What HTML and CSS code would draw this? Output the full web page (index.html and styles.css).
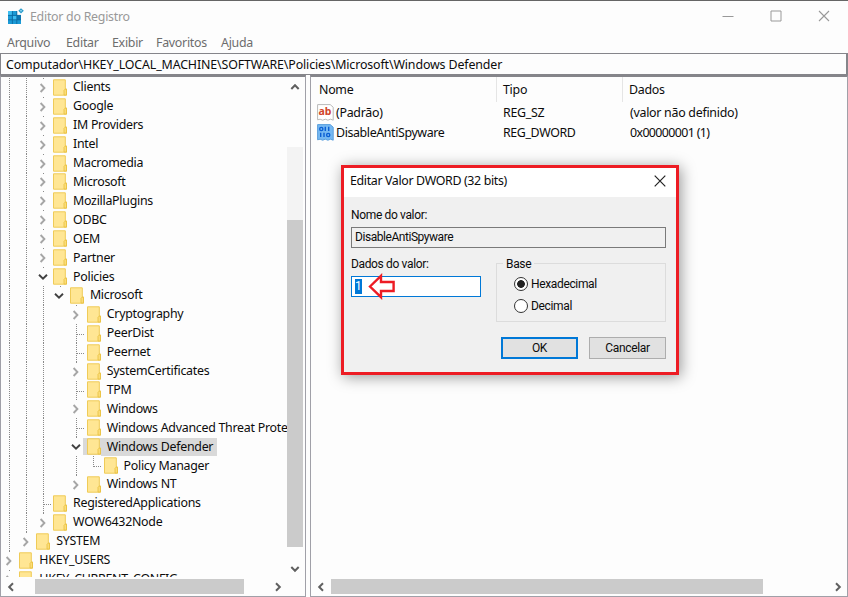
FILE: index.html
```
<!DOCTYPE html>
<html lang="pt-BR">
<head>
    <meta charset="UTF-8">
    <meta name="viewport" content="width=device-width, initial-scale=1.0">
    <title>Editor do Registro</title>
    <link rel="stylesheet" href="styles.css">
</head>
<body>
    <svg class="defs" width="0" height="0">
        <symbol id="folder" viewBox="0 0 14 17">
            <path d="M.5.8h11.8v9.2h1.2v6.2H.5z" fill="#ffe694" stroke="#efcb58"/>
            <path d="M11 16V11.2l1-1h1.5V16z" fill="#fbdc78" stroke="#e9c03f" stroke-width=".8"/>
        </symbol>
        <symbol id="right" viewBox="0 0 8 10">
            <path d="M1.6 1l3.8 4-3.8 4" fill="none" stroke="#a6a6a6" stroke-width="1.9"/>
        </symbol>
        <symbol id="down" viewBox="0 0 10 8">
            <path d="M1 1.8l4 3.8 4-3.8" fill="none" stroke="#404040" stroke-width="1.9"/>
        </symbol>
        <symbol id="arrow" viewBox="0 0 10 10">
            <path d="M7 1.3L3.2 5 7 8.7" fill="none" stroke="#606060" stroke-width="2"/>
        </symbol>
    </svg>

    <div class="window">
        <div class="titlebar">
            <svg class="app-icon" width="18" height="17" viewBox="0 0 18 17">
                <path d="M1 3h9v4h4v9H1z" fill="#1b9ad6"/>
                <path d="M1 3h4v4H1zM6 8h4v4H6z" fill="#3dbdf0"/>
                <path d="M10 8h4v4h-4z" fill="#0b74b0"/>
                <path d="M1 7.4h13M1 11.8h13M5.4 3v13M9.8 3v13" stroke="#0c6ba3" stroke-width=".9"/>
                <path d="M14 .2l2.8 2.6L14 5.6l-2.7-2.8z" fill="#2a9ccc"/>
                <path d="M14 1.8l1 1-1 1-1-1z" fill="#a8e2f8"/>
            </svg>
            <span class="app-title">Editor do Registro</span>
            <div class="window-buttons">
                <svg width="12" height="12" viewBox="0 0 12 12"><path d="M.5 6.5h11" stroke="#999"/></svg>
                <svg width="12" height="12" viewBox="0 0 12 12"><path d="M1 1h10v10H1z" fill="none" stroke="#999"/></svg>
                <svg width="12" height="12" viewBox="0 0 12 12"><path d="M1 1l10 10M11 1L1 11" stroke="#999" stroke-width="1.1"/></svg>
            </div>
        </div>

        <div class="menu">
            <span class="m1">Arquivo</span><span class="m2">Editar</span><span class="m3">Exibir</span><span class="m4">Favoritos</span><span>Ajuda</span>
        </div>

        <div class="address">Computador\HKEY_LOCAL_MACHINE\SOFTWARE\Policies\Microsoft\Windows Defender</div>

        <div class="panes">
            <div class="tree-pane">
                <div class="tree-main">
                    <div class="tree">
                        <div class="row"><i class="g"></i><i class="g"></i><i class="t"><svg class="r"><use href="#right"/></svg></i><svg class="f"><use href="#folder"/></svg><span>Clients</span></div>
                        <div class="row"><i class="g"></i><i class="g"></i><i class="t"><svg class="r"><use href="#right"/></svg></i><svg class="f"><use href="#folder"/></svg><span>Google</span></div>
                        <div class="row"><i class="g"></i><i class="g"></i><i class="t"><svg class="r"><use href="#right"/></svg></i><svg class="f"><use href="#folder"/></svg><span>IM Providers</span></div>
                        <div class="row"><i class="g"></i><i class="g"></i><i class="t"><svg class="r"><use href="#right"/></svg></i><svg class="f"><use href="#folder"/></svg><span>Intel</span></div>
                        <div class="row"><i class="g"></i><i class="g"></i><i class="t"><svg class="r"><use href="#right"/></svg></i><svg class="f"><use href="#folder"/></svg><span>Macromedia</span></div>
                        <div class="row"><i class="g"></i><i class="g"></i><i class="t"><svg class="r"><use href="#right"/></svg></i><svg class="f"><use href="#folder"/></svg><span>Microsoft</span></div>
                        <div class="row"><i class="g"></i><i class="g"></i><i class="t"><svg class="r"><use href="#right"/></svg></i><svg class="f"><use href="#folder"/></svg><span>MozillaPlugins</span></div>
                        <div class="row"><i class="g"></i><i class="g"></i><i class="t"><svg class="r"><use href="#right"/></svg></i><svg class="f"><use href="#folder"/></svg><span>ODBC</span></div>
                        <div class="row"><i class="g"></i><i class="g"></i><i class="t"><svg class="r"><use href="#right"/></svg></i><svg class="f"><use href="#folder"/></svg><span>OEM</span></div>
                        <div class="row"><i class="g"></i><i class="g"></i><i class="t"><svg class="r"><use href="#right"/></svg></i><svg class="f"><use href="#folder"/></svg><span>Partner</span></div>
                        <div class="row"><i class="g"></i><i class="g"></i><i class="t"><svg class="d"><use href="#down"/></svg></i><svg class="f"><use href="#folder"/></svg><span>Policies</span></div>
                        <div class="row"><i class="g"></i><i class="g"></i><i class="g"></i><i class="t"><svg class="d"><use href="#down"/></svg></i><svg class="f"><use href="#folder"/></svg><span>Microsoft</span></div>
                        <div class="row"><i class="g"></i><i class="g"></i><i class="g"></i><i></i><i class="t"><svg class="r"><use href="#right"/></svg></i><svg class="f"><use href="#folder"/></svg><span>Cryptography</span></div>
                        <div class="row"><i class="g"></i><i class="g"></i><i class="g"></i><i></i><i class="g b"></i><svg class="f"><use href="#folder"/></svg><span>PeerDist</span></div>
                        <div class="row"><i class="g"></i><i class="g"></i><i class="g"></i><i></i><i class="g b"></i><svg class="f"><use href="#folder"/></svg><span>Peernet</span></div>
                        <div class="row"><i class="g"></i><i class="g"></i><i class="g"></i><i></i><i class="t"><svg class="r"><use href="#right"/></svg></i><svg class="f"><use href="#folder"/></svg><span>SystemCertificates</span></div>
                        <div class="row"><i class="g"></i><i class="g"></i><i class="g"></i><i></i><i class="g b"></i><svg class="f"><use href="#folder"/></svg><span>TPM</span></div>
                        <div class="row"><i class="g"></i><i class="g"></i><i class="g"></i><i></i><i class="t"><svg class="r"><use href="#right"/></svg></i><svg class="f"><use href="#folder"/></svg><span>Windows</span></div>
                        <div class="row"><i class="g"></i><i class="g"></i><i class="g"></i><i></i><i class="g b"></i><svg class="f"><use href="#folder"/></svg><span>Windows Advanced Threat Protection</span></div>
                        <div class="row selected"><i class="g"></i><i class="g"></i><i class="g"></i><i></i><i class="t"><svg class="d"><use href="#down"/></svg></i><svg class="f"><use href="#folder"/></svg><span>Windows Defender</span></div>
                        <div class="row"><i class="g"></i><i class="g"></i><i class="g"></i><i></i><i class="g"></i><i class="g b last"></i><svg class="f"><use href="#folder"/></svg><span>Policy Manager</span></div>
                        <div class="row"><i class="g"></i><i class="g"></i><i class="g"></i><i></i><i class="t"><svg class="r"><use href="#right"/></svg></i><svg class="f"><use href="#folder"/></svg><span>Windows NT</span></div>
                        <div class="row"><i class="g"></i><i class="g"></i><i class="g b"></i><svg class="f"><use href="#folder"/></svg><span>RegisteredApplications</span></div>
                        <div class="row"><i class="g"></i><i class="g"></i><i class="t"><svg class="r"><use href="#right"/></svg></i><svg class="f"><use href="#folder"/></svg><span>WOW6432Node</span></div>
                        <div class="row"><i class="g"></i><i class="t"><svg class="r"><use href="#right"/></svg></i><svg class="f"><use href="#folder"/></svg><span>SYSTEM</span></div>
                        <div class="row"><i class="t"><svg class="r"><use href="#right"/></svg></i><svg class="f"><use href="#folder"/></svg><span>HKEY_USERS</span></div>
                        <div class="row"><i class="t"><svg class="r"><use href="#right"/></svg></i><svg class="f"><use href="#folder"/></svg><span>HKEY_CURRENT_CONFIG</span></div>
                    </div>
                    <div class="vscroll">
                        <svg class="a up"><use href="#arrow"/></svg>
                        <div class="track"></div>
                        <div class="vthumb"></div>
                        <svg class="a dn"><use href="#arrow"/></svg>
                    </div>
                </div>
                <div class="hscroll">
                    <svg class="a"><use href="#arrow"/></svg>
                    <div class="hthumb"></div>
                    <svg class="a rt"><use href="#arrow"/></svg>
                </div>
            </div>

            <div class="list-pane">
                <div class="list">
                    <div class="list-head">
                        <span class="nome">Nome</span><span class="tipo">Tipo</span><span class="dados">Dados</span>
                    </div>
                    <div class="value">
                        <svg width="17" height="17" viewBox="0 0 17 17">
                            <path d="M.6.6h12.6l3 2.6v13l-2.7-1-2.6 1-2.6-1-2.6 1-2.6-1-2.5.6z" fill="#fff" stroke="#b9b9b9"/>
                            <text x="1.6" y="10.6" class="ab">ab</text>
                        </svg>
                        <span class="name">(Padrão)</span><span class="type">REG_SZ</span><span class="data">(valor não definido)</span>
                    </div>
                    <div class="value">
                        <svg width="17" height="17" viewBox="0 0 17 17">
                            <path d="M.6.6h12.6l3 2.6v13l-2.7-1-2.6 1-2.6-1-2.6 1-2.6-1-2.5.6z" fill="#75b8f2" stroke="#5b9fdc"/>
                            <g fill="none" stroke="#0a5fd4" stroke-width="1.4">
                                <circle cx="4.3" cy="5" r="1.6"/><path d="M8.3 2.8v4.3M11.7 2.8v4.3M3.7 8.8v4.3M7 8.8v4.3"/><circle cx="11.2" cy="11" r="1.6"/>
                            </g>
                        </svg>
                        <span class="name dis">DisableAntiSpyware</span><span class="type dis">REG_DWORD</span><span class="data hex">0x00000001 (1)</span>
                    </div>
                </div>
                <div class="hscroll">
                    <svg class="a"><use href="#arrow"/></svg>
                    <div class="hthumb wide"></div>
                    <svg class="a rt"><use href="#arrow"/></svg>
                </div>
            </div>
        </div>

        <div class="dialog">
            <div class="dialog-title">
                <span>Editar Valor DWORD (32 bits)</span>
                <svg width="12" height="12" viewBox="0 0 12 12"><path d="M.7.7l10.6 10.6M11.3.7L.7 11.3" stroke="#222" stroke-width="1.2"/></svg>
            </div>
            <div class="dialog-body">
                <div class="label">Nome do valor:</div>
                <div class="field readonly">DisableAntiSpyware</div>
                <div class="columns">
                    <div class="left">
                        <div class="label">Dados do valor:</div>
                        <div class="field edit"><span class="sel">1</span>
                            <svg width="28" height="27" viewBox="0 0 28 27"><path d="M2 13.5L13 2.8V9h12.6v9H13v6.2z" fill="#fff" stroke="#ed1c24" stroke-width="2.4"/></svg>
                        </div>
                    </div>
                    <div class="group">
                        <span class="legend">Base</span>
                        <div class="radio"><b class="on"></b><span>Hexadecimal</span></div>
                        <div class="radio"><b></b><span>Decimal</span></div>
                    </div>
                </div>
                <div class="buttons">
                    <div class="btn ok">OK</div>
                    <div class="btn">Cancelar</div>
                </div>
            </div>
        </div>
    </div>
</body>
</html>
```
FILE: styles.css
```
* {
    box-sizing: border-box;
}

body {
    margin: 0;
    font-family: "Noto Sans", "Open Sans", sans-serif;
    font-size: 12.4px;
    letter-spacing: -0.27px;
    color: #0c0c0c;
    background: #fdfdfd;
}

.defs {
    position: absolute;
}

.window {
    width: 848px;
    height: 597px;
    display: flex;
    flex-direction: column;
    overflow: hidden;
    border-top: 1px solid #666;
    white-space: nowrap;
}

.titlebar {
    display: flex;
    align-items: center;
    height: 32px;
    padding: 0 18px 2px 7px;
    color: #999;
    flex: none;
}

.app-title {
    margin-left: 5px;
}

.window-buttons {
    display: flex;
    gap: 36px;
    margin-left: auto;
}

.menu {
    display: flex;
    height: 20px;
    padding-left: 7px;
    line-height: 19px;
    color: #6d6d6d;
    flex: none;
}

.m1 { width: 59px; }
.m2 { width: 46px; }
.m3 { width: 44px; }
.m4 { width: 65px; }

.address {
    height: 22px;
    padding-left: 5px;
    line-height: 21px;
    letter-spacing: -0.13px;
    border: 1px solid #85858a;
    border-right: 2px solid #85858a;
    flex: none;
}

.panes {
    display: flex;
    flex: 1;
    gap: 4px;
    min-height: 0;
}

.tree-pane,
.list-pane {
    display: flex;
    flex-direction: column;
    border: 1px solid #a0a0a8;
    border-top: 2px solid #85858a;
}

.tree-pane {
    width: 306px;
}

.list-pane {
    flex: 1;
}

.tree-main {
    display: flex;
    height: 500px;
    overflow: hidden;
}

.tree {
    width: 286px;
    padding-top: 1px;
    overflow: hidden;
}

.row {
    display: flex;
    align-items: center;
    height: 18.92px;
}

.row i {
    position: relative;
    flex: none;
    width: 16.85px;
    height: 18.92px;
}

.row i.g::before {
    content: "";
    position: absolute;
    left: 8px;
    top: 0;
    width: 1px;
    height: 100%;
    background: repeating-linear-gradient(#8a8a8a 0 1px, transparent 1px 2px);
}

.row i.b::after {
    content: "";
    position: absolute;
    left: 9px;
    top: 10px;
    width: 8px;
    height: 1px;
    background: repeating-linear-gradient(90deg, #8a8a8a 0 1px, transparent 1px 2px);
}

.row i.last::before {
    height: 11px;
}

.row i.t {
    display: flex;
    align-items: center;
    justify-content: center;
    padding-top: 1px;
    padding-right: 1px;
}

/* guide dot between two expanders */
.row i.t::before {
    content: "";
    position: absolute;
    left: 8px;
    top: 0;
    width: 1px;
    height: 1px;
    background: #8a8a8a;
}

.r {
    width: 8px;
    height: 10px;
}

.d {
    width: 10px;
    height: 8px;
}

.f {
    flex: none;
    width: 14px;
    height: 17px;
    margin-left: 1.5px;
}

.row span {
    padding-left: 6px;
    padding-right: 4px;
    line-height: 18px;
}

.selected .f {
    box-shadow: -4px 0 #d9d9d9;
    background: #d9d9d9;
}

.selected span {
    background: #d9d9d9;
}

.vscroll {
    display: flex;
    flex-direction: column;
    align-items: center;
    width: 16px;
    padding-top: 5px;
}

.a {
    width: 10px;
    height: 10px;
    flex: none;
}

.up {
    transform: rotate(90deg);
}

.dn {
    margin-top: 17px;
    transform: rotate(-90deg);
}

.rt {
    margin-left: auto;
    transform: scaleX(-1);
}

.track {
    width: 16px;
    height: 73px;
    margin-top: 55px;
    background: #f3f3f3;
}

.vthumb {
    width: 16px;
    height: 327px;
    background: #cbcbcb;
}

.hscroll {
    display: flex;
    align-items: center;
    height: 18px;
    padding: 1px 22px 0 5px;
}

.hthumb {
    width: 209px;
    height: 15px;
    margin-left: 19px;
    background: #cbcbcb;
}

.list {
    height: 500px;
    padding-left: 6px;
}

.list-head {
    display: flex;
    height: 25px;
    line-height: 26px;
}

.nome { width: 179px; padding-left: 2px; }
.tipo { width: 126px; padding-left: 6px; border-left: 1px solid #e5e5e5; }
.dados { padding-left: 6px; border-left: 1px solid #e5e5e5; }

.value {
    display: flex;
    align-items: center;
    height: 20px;
}

.name { width: 167px; padding-left: 2px; }
.type { width: 126px; padding-left: 2px; }
.data { padding-left: 3px; }

.dis {
    letter-spacing: -0.38px;
}

.hex {
    letter-spacing: -0.62px;
}

.ab {
    font: bold 10.5px "Noto Sans", sans-serif;
    letter-spacing: -0.2px;
    fill: #d0452a;
}

.list-pane .hscroll {
    padding-right: 4px;
}

.hthumb.wide {
    width: 432px;
    margin-left: 5px;
}

/* dialog over the panes */
.dialog {
    position: absolute;
    left: 341px;
    top: 165px;
    width: 338px;
    height: 210px;
    border: 3px solid #ed1c24;
    background: #f0f0f0;
    box-shadow: 2px 2px 14px rgba(0, 0, 0, 0.4);
}

.dialog-title {
    display: flex;
    align-items: center;
    justify-content: space-between;
    height: 29px;
    padding: 0 10px 4px 6px;
    letter-spacing: -0.35px;
    background: #fff;
}

.dialog-body {
    padding: 10px 10px 0 7px;
    font-family: Roboto, "Liberation Sans", sans-serif;
    font-size: 12px;
    letter-spacing: -0.35px;
}

.label {
    height: 20px;
    line-height: 17px;
}

.field {
    display: flex;
    align-items: center;
    height: 21px;
    padding-left: 3px;
}

.readonly {
    padding-bottom: 1px;
    border: 1px solid #7a7a7a;
    letter-spacing: -0.45px;
}

.edit {
    width: 130px;
    border: 1px solid #0078d7;
    background: #fff;
}

.edit svg {
    flex: none;
    margin: 0 0 0 6px;
}

.sel {
    width: 7px;
    line-height: 15px;
    color: #fff;
    background: #0078d7;
}

.columns {
    display: flex;
    justify-content: space-between;
    margin-top: 8px;
}

.group {
    position: relative;
    width: 170px;
    height: 59px;
    margin-top: 7px;
    padding: 9px 0 0 17px;
    border: 1px solid #dcdcdc;
}

.legend {
    position: absolute;
    left: 6px;
    top: -7px;
    padding: 0 3px;
    background: #f0f0f0;
}

.radio {
    display: flex;
    align-items: center;
    gap: 3px;
    height: 22px;
}

.radio b {
    width: 14px;
    height: 14px;
    border: 1px solid #333;
    border-radius: 50%;
    background: #fff;
}

.radio b.on {
    background: radial-gradient(circle, #222 0 3.5px, #fff 4.2px);
}

.buttons {
    display: flex;
    justify-content: flex-end;
    gap: 11px;
    margin-top: 15px;
}

.btn {
    width: 77px;
    height: 22px;
    line-height: 20px;
    text-align: center;
    border: 1px solid #adadad;
    background: #e1e1e1;
}

.ok {
    line-height: 18px;
    border: 2px solid #0078d7;
}
```
